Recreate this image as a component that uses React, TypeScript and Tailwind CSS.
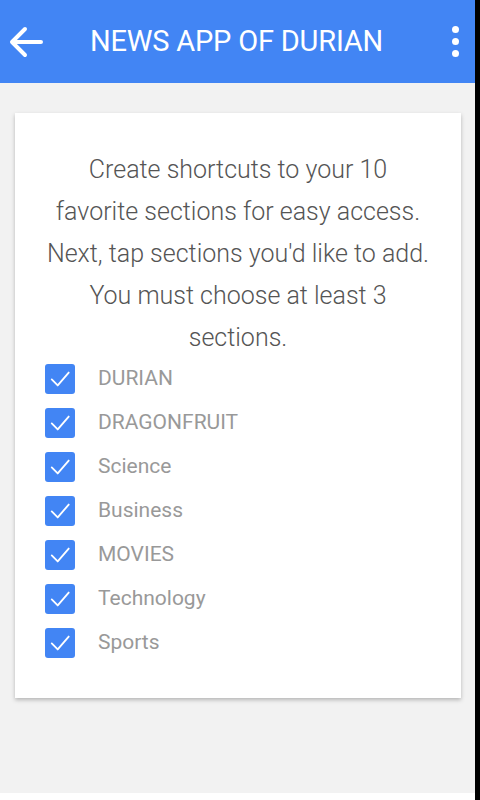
import React from "react";

const items = ["DURIAN", "DRAGONFRUIT", "Science", "Business", "MOVIES", "Technology", "Sports"];

function Check() {
  return (
    <div className="w-[30px] h-[30px] rounded-[3px] bg-[#4285f4] flex items-center justify-center shrink-0">
      <svg width="22" height="22" viewBox="0 0 24 24" fill="none">
        <path d="M3 12.5 L9.5 19 L21.5 5" stroke="white" strokeWidth="2" strokeLinecap="round" strokeLinejoin="round" />
      </svg>
    </div>
  );
}

export default function App() {
  return (
    <div className="w-[480px] h-[800px] bg-black flex" style={{ fontFamily: "Roboto, 'Noto Sans', sans-serif" }}>
      <div className="w-[475px] h-[800px] flex flex-col bg-white">
        <div className="h-[83px] bg-[#4285f4] flex items-center shrink-0 relative">
          <div className="w-[50px] pl-[8px] flex items-center">
            <svg width="36" height="36" viewBox="0 0 36 36" fill="none">
              <path d="M33 18 H5 M17 5 L4 18 L17 31" stroke="white" strokeWidth="4" strokeLinecap="round" strokeLinejoin="round" />
            </svg>
          </div>
          <div className="ml-[40px] text-white text-[29px] tracking-[-0.2px] font-normal leading-none">NEWS APP OF DURIAN</div>
          <div className="ml-auto mr-[16px] flex flex-col gap-[5px]">
            <div className="w-[7px] h-[7px] rounded-full bg-white" />
            <div className="w-[7px] h-[7px] rounded-full bg-white" />
            <div className="w-[7px] h-[7px] rounded-full bg-white" />
          </div>
        </div>
        <div className="h-[710px] bg-[#f2f2f2] pt-[30px] pl-[15px] pr-[14px]">
          <div className="bg-white h-[585px] shadow-[0_2px_4px_rgba(0,0,0,0.25)] pt-[36px]">
            <p className="text-center text-[25px] leading-[42px] text-[#555] font-light px-[10px]">
              Create shortcuts to your 10<br />favorite sections for easy access.<br />Next, tap sections you'd like to add.<br />You must choose at least 3<br />sections.
            </p>
            <div className="pl-[30px] mt-[-2px] flex flex-col">
              {items.map((t) => (
                <div key={t} className="h-[44px] flex items-center gap-[23px]">
                  <Check />
                  <span className="text-[21px] text-[#999]">{t}</span>
                </div>
              ))}
            </div>
          </div>
        </div>
        <div className="flex-1 bg-white" />
      </div>
    </div>
  );
}
